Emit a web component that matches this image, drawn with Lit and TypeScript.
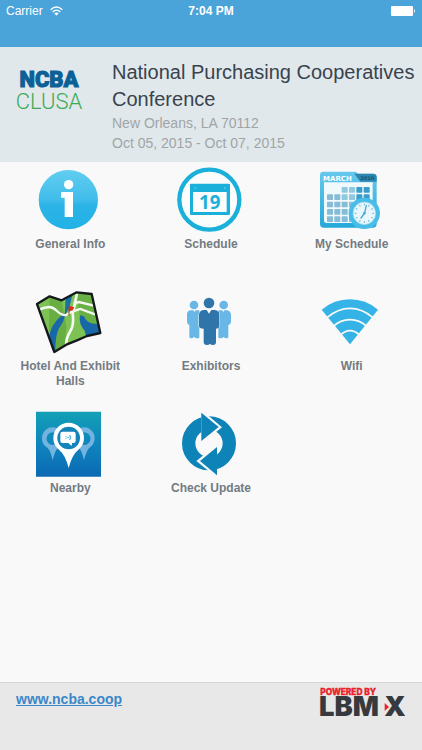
import { LitElement, html, svg, css, type SVGTemplateResult } from "lit";
import { customElement } from "lit/decorators.js";

interface Tile {
  label: string;
  viewBox: string;
  art: SVGTemplateResult;
}

const infoArt = svg`
  <defs>
    <linearGradient id="info" x1="0" y1="0" x2="0" y2="1">
      <stop offset="0" stop-color="#62cdf0" />
      <stop offset="0.5" stop-color="#40bdea" />
      <stop offset="0.6" stop-color="#2bb3e6" />
      <stop offset="1" stop-color="#22b2e6" />
    </linearGradient>
  </defs>
  <circle cx="116" cy="104" r="89" fill="url(#info)" />
  <circle cx="117" cy="59" r="14" fill="#fff" />
  <path d="M94 81h36v75h-25V98H94z" fill="#fff" />`;

const scheduleArt = svg`
  <circle cx="118" cy="104" r="90" fill="#fbfdfd" stroke="#1bb0da" stroke-width="13" />
  <path d="M60 59q0-3 3-3h114q3 0 3 3v88q0 3-3 3H63q-3 0-3-3z" fill="#1bb0da" />
  <path d="M69 81h101v60H69z" fill="#fbfdfd" />
  <circle cx="76" cy="69" r="3" fill="#5cc8e6" />
  <circle cx="164" cy="69" r="3" fill="#5cc8e6" />
  <text class="day" x="119" y="131" text-anchor="middle">19</text>`;

const cells: SVGTemplateResult[] = [];
for (let row = 0; row < 5; row++) {
  for (let col = 0; col < 6; col++) {
    if (row === 0 && col < 2) continue;
    const fill = col > 3 && row < 2 ? "#3a9cc9" : row < 2 && col > 1 ? "#90c9df" : "#86bcd6";
    cells.push(svg`<rect x=${66 + col * 22} y=${66 + row * 22} width="18" height="17" rx="2" fill=${fill} />`);
  }
}
const ticks = Array.from({ length: 12 }, (_, i) => i * 30);

const myScheduleArt = svg`
  <defs>
    <linearGradient id="cal" x1="0" y1="0" x2="0" y2="1">
      <stop offset="0" stop-color="#66c8ec" />
      <stop offset="1" stop-color="#25a9da" />
    </linearGradient>
  </defs>
  <path d="M54 20h96q5 0 9 6h46q10 0 10 10v140q0 12-12 12H57q-12 0-12-12V30q0-10 9-10z" fill="url(#cal)" />
  <path d="M148 26h56q11 0 11 11v13h-49z" fill="#2c86b0" />
  <text class="year" x="166" y="44">2010</text>
  <path d="M57 52h146v114q0 8-8 8H65q-8 0-8-8z" fill="#f0f9fc" />
  ${cells}
  <text class="month" x="54" y="48">MARCH</text>
  <circle cx="178" cy="145" r="47" fill="#48bde8" />
  <circle cx="178" cy="145" r="34" fill="#e9f6fb" stroke="#8fd6ef" stroke-width="2" />
  ${ticks.map(
    (a) => svg`<path d="M178 116v5" transform="rotate(${a} 178 145)" stroke="#58b6da" stroke-width="3" />`
  )}
  <path d="M184 121l-5 23-11 15" fill="none" stroke="#4aa9d0" stroke-width="4" stroke-linecap="round" />
  <circle cx="178" cy="145" r="4" fill="#4aa9d0" />`;

const mapArt = svg`
  <defs>
    <clipPath id="sheet"><path d="M82 57l38-23 36 12 45-24 45 5 26 117-40 9-30 13-32 13-36 22z" /></clipPath>
  </defs>
  <g clip-path="url(#sheet)">
    <path d="M70 15h210v195H70z" fill="#7cc254" />
    <path d="M120 34l36 12 14 80-5 60-33 20-14-80z" fill="#68ae42" />
    <path d="M201 22l45 5 26 117-40 9-22-60z" fill="#69b045" />
    <path d="M168 40l22-16-12 46-13 22z" fill="#1a6fa8" />
    <path d="M168 84q-4 24-20 46-12 22-11 76l-20-34q2-36 14-52 15-24 37-36z" fill="#1767a9" />
    <path d="M211 92q12-2 16 10 12 17 36 14l14 28-50 13q4-16-8-28-12-16-8-37z" fill="#1767a9" />
    <path d="M84 76q18-9 34-10 12 0 24 12 14 14 28 12l16-10 12-25" fill="none" stroke="#f5f8f0" stroke-width="7" />
    <path d="M203 20l-14 66q5 34-8 54-13 20-12 50" fill="none" stroke="#f5f8f0" stroke-width="8" />
    <path d="M192 55l16-4 44 11M190 79l22-7 44 16" fill="none" stroke="#f5f8f0" stroke-width="7" />
  </g>
  <path d="M82 57l38-23 36 12 45-24 45 5 26 117-40 9-30 13-32 13-36 22z" fill="none" stroke="#15191b" stroke-width="7" stroke-linejoin="round" />
  <path d="M178 63v29" stroke="#a23c2a" stroke-width="3" />
  <path d="M178 62l16 5-5 9-11 3z" fill="#e02c1d" />`;

const exhibitorsArt = svg`
  <g fill="#68b7e6">
    <circle cx="72" cy="60" r="13" />
    <path d="M61 76h9l3 5 4-5h11v82q-7 4-12 0l-4-2-4 3q-8 3-10-3v-36q-7-3-7-10V87q1-9 10-11z" />
    <circle cx="161" cy="60" r="13" />
    <path d="M172 76h-9l-3 5-4-5h-11v82q7 4 12 0l4-2 4 3q8 3 10-3v-36q8-3 8-10V87q-2-9-11-11z" />
  </g>
  <circle cx="117" cy="54" r="16" fill="#2f75a9" />
  <path d="M100 75h10l7 11 7-11h10q14 2 14 14v35q-1 7-10 7v40q0 9-9 9-7 0-9-4-3 4-9 4-10 0-10-9v-40q-14 0-14-8V89q1-12 13-14z" fill="#2f75a9" stroke="#f9f9f9" stroke-width="3" paint-order="stroke" />`;

const wifiArt = svg`
  <path d="M135 178L50 74Q88 43 135 43t84 31z" fill="#35b3e6" />
  <g fill="none" stroke="#f9f9f9" stroke-width="5">
    <path d="M66 98Q98 70 135 70t69 28" />
    <path d="M84 125Q106 104 135 104t51 21" />
    <path d="M107 150Q120 137 135 137t28 13" />
  </g>`;

const nearbyArt = svg`
  <defs>
    <linearGradient id="near" x1="0" y1="0" x2="0" y2="1">
      <stop offset="0" stop-color="#12a0b6" />
      <stop offset="0.55" stop-color="#0f82bd" />
      <stop offset="1" stop-color="#0b69b2" />
    </linearGradient>
  </defs>
  <path d="M19 20h195v195H19z" fill="url(#near)" />
  <path fill="#72b4df" fill-rule="evenodd" d="M69 67a32 32 0 0 1 32 34q-1 17-16 27-9 8-16 38-6-30-16-38-16-10-16-27a32 32 0 0 1 32-34zm0 15a19 19 0 1 0 1 38 19 19 0 0 0-1-38z" />
  <path fill="#72b4df" fill-rule="evenodd" d="M163 67a32 32 0 0 1 32 34q-1 17-16 27-9 8-16 38-6-30-16-38-16-10-16-27a32 32 0 0 1 32-34zm0 15a19 19 0 1 0 1 38 19 19 0 0 0-1-38z" />
  <path d="M117 53a46 46 0 0 1 46 47q0 22-20 37-16 13-26 52-10-39-26-52-20-15-20-37a46 46 0 0 1 46-47z" fill="#fff" />
  <circle cx="117" cy="99" r="34" fill="#1384ba" />
  <path d="M98 80h34q6 0 6 6v22q0 6-6 6h-5l-1 9-10-9H98q-6 0-6-6V86q0-6 6-6z" fill="#fff" />
  <text class="smile" x="115" y="103" text-anchor="middle">:-)</text>`;

const updateArt = svg`
  <circle cx="147" cy="115" r="61" fill="none" stroke="#0d83b8" stroke-width="40" />
  <path d="M124 14L186 67L124 116z" fill="#f9f9f9" />
  <path d="M171 218L109 168L171 118z" fill="#f9f9f9" />
  <path d="M124 23L176 66L124 108z" fill="#0d83b8" />
  <path d="M171 211L120 168L171 126z" fill="#0d83b8" />`;

const tiles: Tile[] = [
  { label: "General Info", viewBox: "13 0 210 210", art: infoArt },
  { label: "Schedule", viewBox: "15 0 210 210", art: scheduleArt },
  { label: "My Schedule", viewBox: "33 0 210 210", art: myScheduleArt },
  { label: "Hotel And Exhibit Halls", viewBox: "73 6 210 210", art: mapArt },
  { label: "Exhibitors", viewBox: "15 6 210 210", art: exhibitorsArt },
  { label: "Wifi", viewBox: "33 6 210 210", art: wifiArt },
  { label: "Nearby", viewBox: "13 12 210 210", art: nearbyArt },
  { label: "Check Update", viewBox: "45 12 210 210", art: updateArt },
];

@customElement("app-root")
export class AppRoot extends LitElement {
  static styles = css`
    :host {
      display: flex;
      flex-direction: column;
      min-height: 100vh;
      background: #f9f9f9;
      font-family: "Liberation Sans", Arial, sans-serif;
    }
    .status {
      display: grid;
      grid-template-columns: 1fr auto 1fr;
      align-items: start;
      box-sizing: border-box;
      height: 47px;
      padding: 3px 6px 0;
      background: #4aa3d9;
      color: #fff;
      font-size: 12px;
      line-height: 16px;
    }
    .carrier {
      display: flex;
      align-items: center;
      gap: 7px;
    }
    .signal {
      width: 13px;
      height: 10px;
    }
    .time {
      font-weight: bold;
    }
    .battery {
      justify-self: end;
      width: 26px;
      height: 16px;
    }
    .event {
      display: flex;
      padding: 12px 0 9px 14px;
      background: #e1e8eb;
    }
    .brand {
      flex: none;
      width: 70px;
      height: 54px;
      margin: 6px 28px 0 0;
    }
    .ncba {
      font: 900 22px Roboto, sans-serif;
      fill: #0c6096;
      stroke: #0c6096;
    }
    .clusa {
      font: 300 22px Roboto, sans-serif;
      fill: #3cab57;
    }
    .title {
      margin: 0;
      color: #38434e;
      font-size: 20px;
      font-weight: normal;
      line-height: 27px;
    }
    .detail {
      margin: 0;
      color: #a0a4a7;
      font-size: 14px;
      line-height: 20px;
    }
    .menu {
      flex: 1;
      display: grid;
      grid-template-columns: repeat(3, 1fr);
      grid-auto-rows: 122px;
    }
    .tile {
      display: flex;
      flex-direction: column;
      align-items: center;
      padding: 3px 16px 0;
      border: 0;
      background: none;
      color: #737b82;
      font: bold 12px/15px "Liberation Sans", Arial, sans-serif;
      cursor: pointer;
    }
    .icon {
      flex: none;
      width: 70px;
      height: 70px;
      margin: 0 2px 2px 0;
    }
    .day {
      font: bold 56px "Open Sans", sans-serif;
      fill: #1bb0da;
    }
    .month {
      font: bold 21px "DejaVu Sans", sans-serif;
      fill: #fff;
    }
    .year {
      font: bold 15px "DejaVu Sans", sans-serif;
      fill: #16587a;
    }
    .smile {
      font: bold 18px "Liberation Sans", sans-serif;
      fill: #1384ba;
    }
    .footer {
      display: flex;
      justify-content: space-between;
      align-items: flex-start;
      box-sizing: border-box;
      min-height: 68px;
      padding: 2px 14px 0 16px;
      border-top: 1px solid #d6d6d6;
      background: #e8e8e8;
    }
    .site {
      margin-top: 5px;
      color: #3b87c8;
      font-size: 14px;
      font-weight: bold;
      line-height: 18px;
    }
    .sponsor {
      width: 90px;
      height: 40px;
    }
    .powered {
      font: 800 25px Inter, sans-serif;
      fill: #e8212b;
      stroke: #e8212b;
    }
    .lbmx {
      font: 900 82px Inter, sans-serif;
      fill: #363a3e;
    }
  `;

  render() {
    return html`
      <div class="status">
        <span class="carrier">
          Carrier
          <svg class="signal" viewBox="0 0 39 30" aria-hidden="true">
            <g fill="none" stroke="#fff" stroke-width="4">
              <path d="M2 11Q19-5 37 11" />
              <path d="M8 18Q19 7 31 18" />
            </g>
            <path d="M13 22Q19 17 26 22L19 29z" fill="#fff" />
          </svg>
        </span>
        <span class="time">7:04 PM</span>
        <svg class="battery" viewBox="0 0 26 16" aria-hidden="true">
          <rect x="1" y="3" width="22" height="10" rx="1" fill="#fff" />
          <path d="M24 6q2 2 0 4z" fill="#fff" />
        </svg>
      </div>
      <header class="event">
        <svg class="brand" viewBox="0 0 70 54" role="img" aria-label="NCBA CLUSA">
          <text class="ncba" x="35" y="22" text-anchor="middle">NCBA</text>
          <text class="clusa" x="35" y="44" text-anchor="middle">CLUSA</text>
        </svg>
        <div>
          <h1 class="title">National Purchasing Cooperatives Conference</h1>
          <p class="detail">New Orleans, LA 70112</p>
          <p class="detail">Oct 05, 2015 - Oct 07, 2015</p>
        </div>
      </header>
      <main class="menu">
        ${tiles.map(
          (t) => html`
            <button class="tile" type="button">
              <svg class="icon" viewBox=${t.viewBox} aria-hidden="true">${t.art}</svg>
              <span>${t.label}</span>
            </button>
          `
        )}
      </main>
      <footer class="footer">
        <a class="site" href="#">www.ncba.coop</a>
        <svg class="sponsor" viewBox="54 30 270 120" role="img" aria-label="Powered by LBMX">
          <text class="powered" x="61" y="60">POWERED BY</text>
          <text class="lbmx" x="57" y="124">LBM</text>
          <text class="lbmx" x="317" y="124" text-anchor="end">X</text>
          <path d="M254 84l13 12-13 12z" fill="#e8212b" stroke="#e8e8e8" stroke-width="3" paint-order="stroke" />
        </svg>
      </footer>
    `;
  }
}
